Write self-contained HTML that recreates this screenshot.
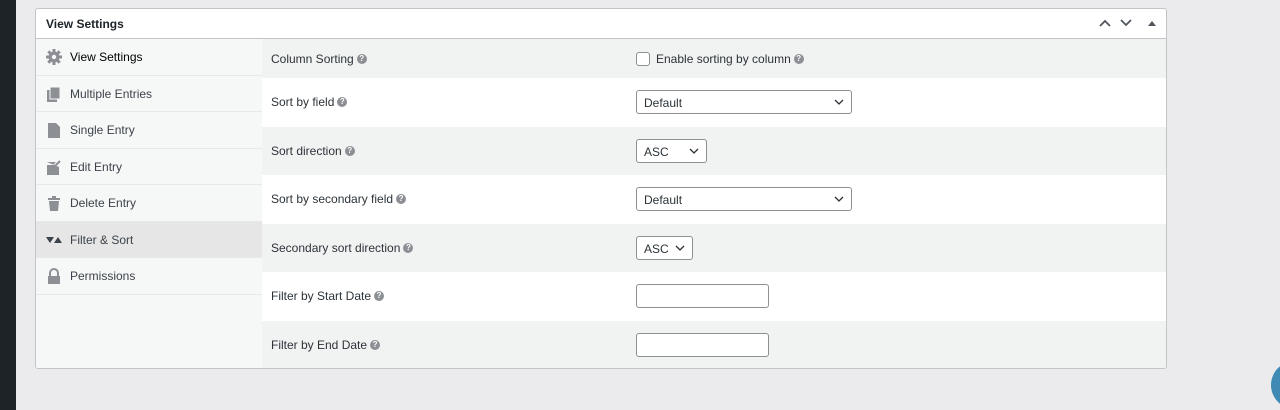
<!DOCTYPE html>
<html><head><meta charset="utf-8"><style>
*{box-sizing:border-box;margin:0;padding:0}
body{width:1280px;height:410px;background:#ebebed;font-family:"Liberation Sans",sans-serif;font-size:12px;color:#1d2327;position:relative;overflow:hidden}
.side{position:absolute;left:0;top:0;width:16px;height:410px;background:#1d2327}
.box{position:absolute;left:35px;top:8px;width:1132px;height:361px;background:#fff;border:1px solid #c3c4c7;border-radius:3px;overflow:hidden}
.hd{position:absolute;left:0;top:0;width:100%;height:30px;border-bottom:1px solid #c3c4c7;font-weight:bold;font-size:12px;padding:8px 10px}
.nav{position:absolute;left:0;top:30px;width:226px;height:330px;background:#f6f7f7}
.ni{height:36.5px;border-bottom:1px solid #e8e8e8;position:relative;color:#3c434a;padding:11px 0 0 34px}
.ni.on{background:#e6e6e6}
.ni.first{color:#000}
.ic{position:absolute;left:10px;top:10px;width:16px;height:16px}
.rows{position:absolute;left:226px;top:30px;width:906px}
.r{position:relative;height:48.5px;padding-left:9px;display:flex;align-items:center;color:#2c3338}
.r.g{background:#f1f2f2}
.q{display:inline-block;width:10px;height:10px;border-radius:50%;background:#8c8f94;color:#fff;font-size:8px;line-height:10px;text-align:center;font-weight:bold;vertical-align:-1px;margin-left:3px}
.c{position:absolute;left:374px}
.sel{height:24px;border:1px solid #8c8f94;border-radius:3px;background:#fff;padding:5px 7px}
.sel svg{position:absolute;right:7px;top:8px}
.inp{width:133px;height:24px;border:1px solid #8c8f94;border-radius:3px;background:#fff}
</style></head><body>
<div class="side"></div>
<div class="box">
<div class="hd">View Settings
<svg style="position:absolute;left:1063px;top:10px" width="12" height="8"><path d="M1 7l5-5 5 5" stroke="#50575e" stroke-width="1.8" fill="none"/></svg>
<svg style="position:absolute;left:1084px;top:10px" width="12" height="8"><path d="M1 1l5 5 5-5" stroke="#50575e" stroke-width="1.8" fill="none"/></svg>
<svg style="position:absolute;left:1112px;top:12px" width="8" height="5"><path d="M0 5L4 0 8 5z" fill="#50575e"/></svg>
</div>
<div class="nav">
<div class="ni first"><svg class="ic" viewBox="0 0 16 16"><circle cx="8" cy="8" r="5.5" fill="#8c8f94"/><g stroke="#8c8f94" stroke-width="3"><path d="M8 0v16M0 8h16M2.3 2.3l11.4 11.4M13.7 2.3L2.3 13.7"/></g><circle cx="8" cy="8" r="2.2" fill="#f6f7f7"/></svg>View Settings</div>
<div class="ni"><svg class="ic" viewBox="0 0 16 16"><rect x="1" y="4" width="10" height="12" fill="#8c8f94"/><rect x="4" y="1" width="10" height="12" fill="#8c8f94" stroke="#f6f7f7"/></svg>Multiple Entries</div>
<div class="ni"><svg class="ic" viewBox="0 0 16 16"><path d="M2 1h8l4 4v11H2z" fill="#8c8f94"/></svg>Single Entry</div>
<div class="ni"><svg class="ic" viewBox="0 0 16 16"><path d="M1 3h9l-3 3v0H1zM1 3v13h12V8" fill="#8c8f94"/><path d="M7 9l7-7" stroke="#8c8f94" stroke-width="2"/></svg>Edit Entry</div>
<div class="ni"><svg class="ic" viewBox="0 0 16 16"><path d="M2 3h12v2H2zM6 1h4v2H6zM3 6h10l-1 10H4z" fill="#8c8f94"/></svg>Delete Entry</div>
<div class="ni on"><svg class="ic" viewBox="0 0 16 16"><path d="M0 5h8l-4 6zM8 11l4-6 4 6z" fill="#3c434a"/></svg>Filter &amp; Sort</div>
<div class="ni"><svg class="ic" viewBox="0 0 16 16"><path d="M4 8V5a4 4 0 018 0v3" stroke="#8c8f94" stroke-width="2" fill="none"/><rect x="2" y="8" width="12" height="8" fill="#8c8f94"/></svg>Permissions</div>
</div>
<div class="rows">
<div class="r g" style="height:39px">Column Sorting<span class="q">?</span><div class="c" style="display:flex;align-items:center"><span style="width:14px;height:14px;border:1px solid #8c8f94;border-radius:3px;background:#fff;display:inline-block;margin-right:6px"></span>Enable sorting by column<span class="q">?</span></div></div>
<div class="r">Sort by field<span class="q">?</span><div class="c sel" style="width:216px">Default<svg width="10" height="6"><path d="M1 1l4 4 4-4" stroke="#2c3338" stroke-width="1.3" fill="none"/></svg></div></div>
<div class="r g">Sort direction<span class="q">?</span><div class="c sel" style="width:71px">ASC<svg width="10" height="6"><path d="M1 1l4 4 4-4" stroke="#2c3338" stroke-width="1.3" fill="none"/></svg></div></div>
<div class="r">Sort by secondary field<span class="q">?</span><div class="c sel" style="width:216px">Default<svg width="10" height="6"><path d="M1 1l4 4 4-4" stroke="#2c3338" stroke-width="1.3" fill="none"/></svg></div></div>
<div class="r g">Secondary sort direction<span class="q">?</span><div class="c sel" style="width:57px">ASC<svg width="10" height="6"><path d="M1 1l4 4 4-4" stroke="#2c3338" stroke-width="1.3" fill="none"/></svg></div></div>
<div class="r">Filter by Start Date<span class="q">?</span><div class="c inp"></div></div>
<div class="r g">Filter by End Date<span class="q">?</span><div class="c inp"></div></div>
</div>
</div>
<div style="position:absolute;left:1271px;top:361px;width:48px;height:48px;border-radius:50%;background:#3e8ab5"></div>
</body></html>
